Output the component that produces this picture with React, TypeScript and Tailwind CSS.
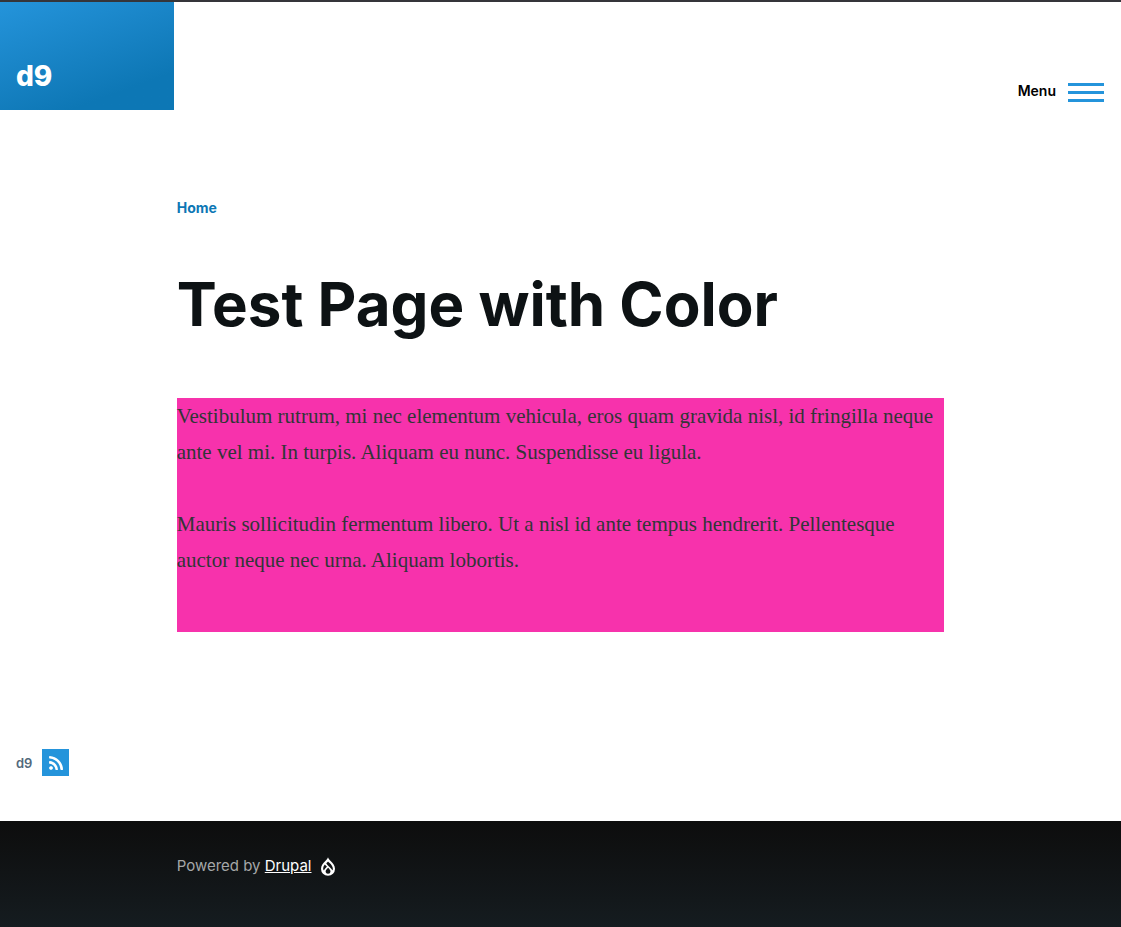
import React from 'react';

const paragraphs = [
  'Vestibulum rutrum, mi nec elementum vehicula, eros quam gravida nisl, id fringilla neque ante vel mi. In turpis. Aliquam eu nunc. Suspendisse eu ligula.',
  'Mauris sollicitudin fermentum libero. Ut a nisl id ante tempus hendrerit. Pellentesque auctor neque nec urna. Aliquam lobortis.',
];

const RssIcon = () => (
  <svg className="h-[14px] w-[14px]" viewBox="0 0 14.2 14.2" fill="white" aria-hidden="true">
    <path d="M4 12.2c0-2.5-3.9-2.4-3.9 0C.1 14.7 4 14.6 4 12.2zM9.1 13.4C8.7 9 5.2 5.5.8 5.1c-1 0-1 2.7-.1 2.7 3.1.3 5.5 2.7 5.8 5.8 0 .7 2.1.7 2.5.3.1-.2.1-.3.1-.5zM14.2 13.5c-.1-3.5-1.6-6.9-4.1-9.3C7.6 1.7 4.3.2.8 0c-1 0-1 2.6-.1 2.6 5.8.3 10.5 5 10.8 10.8 0 1.1 2.8 1 2.7.1z" />
  </svg>
);

const DrupalIcon = () => (
  <svg className="h-[19px] w-[14px]" viewBox="0 0 42.15 55.08" fill="white" aria-hidden="true">
    <path
      fillRule="evenodd"
      d="M29.75 11.73C25.87 7.86 22.18 4.16 21.08 0 20 4.16 16.28 7.86 12.4 11.73 6.59 17.54 0 24.12 0 34a21.08 21.08 0 1 0 42.15 0c0-9.88-6.59-16.46-12.4-22.27zM10.84 35.92a14.13 14.13 0 0 0-1.65 2.62.54.54 0 0 1-.36.3h-.18c-.47 0-1-.92-1-.92-.14-.22-.27-.45-.4-.69l-.09-.19C5.94 34.25 7 30.28 7 30.28a17.42 17.42 0 0 1 2.52-5.41 31.53 31.53 0 0 1 2.28-3l1 1 4.72 4.82a.54.54 0 0 1 0 .72l-4.93 5.47zm10.48 13.81a7.29 7.29 0 0 1-5.4-12.14c1.54-1.83 3.42-3.63 5.46-6 2.42 2.58 4 4.35 5.55 6.29a3.08 3.08 0 0 1 .32.48 7.15 7.15 0 0 1 1.3 4.12 7.23 7.23 0 0 1-7.23 7.25zM35 38.14a.84.84 0 0 1-.67.58h-.14a1.22 1.22 0 0 1-.68-.55 37.77 37.77 0 0 0-4.28-5.31l-1.93-2-6.41-6.65a54 54 0 0 1-3.84-3.94 1.3 1.3 0 0 0-.1-.15 3.84 3.84 0 0 1-.51-1v-.19a3.4 3.4 0 0 1 1-3c1.24-1.24 2.49-2.49 3.67-3.79 1.3 1.44 2.69 2.82 4.06 4.19a57.6 57.6 0 0 1 7.55 8.58A16 16 0 0 1 35.65 34a14.55 14.55 0 0 1-.65 4.14z"
    />
  </svg>
);

const Header = () => (
  <header className="flex items-start justify-between">
    <a
      href="#"
      className="flex h-[108px] w-[174px] items-end bg-linear-160 from-[#2494db] to-[#0d77b5] to-78% px-4 pb-4 text-[28px] leading-9 font-extrabold text-white"
    >
      d9
    </a>
    <button type="button" className="mt-[71px] mr-[17px] flex h-9 items-center gap-3 text-sm font-semibold text-black">
      Menu
      <span className="mt-0.5 flex w-9 flex-col gap-[5px]">
        <span className="h-[3px] bg-[#2494db]" />
        <span className="h-[3px] bg-[#2494db]" />
        <span className="h-[3px] bg-[#2494db]" />
      </span>
    </button>
  </header>
);

export default function App() {
  return (
    <div className="flex min-h-screen flex-col border-t-2 border-[#35353a] bg-white font-['Inter',sans-serif]">
      <Header />

      <main className="grid grid-cols-14 gap-x-9 px-4 pt-[89px]">
        <div className="col-span-10 col-start-3">
          <nav aria-label="Breadcrumb" className="text-sm leading-[18px] font-bold text-[#0d77b5]">
            <a href="#">Home</a>
          </nav>
          <h1 className="mt-[51px] text-[60px] leading-[72px] font-bold text-[#0d1214]">Test Page with Color</h1>
          <div className="mt-[58px] bg-[#f732ac] pb-[18px] font-['Liberation_Serif',serif] text-[21px] leading-9 text-[#313637]">
            {paragraphs.map((text) => (
              <p key={text} className="pb-9">
                {text}
              </p>
            ))}
          </div>
        </div>
      </main>

      <div className="mt-[117px] mb-[45px] flex items-center gap-[10px] px-4">
        <span className="text-[13px] leading-[18px] font-semibold text-[#52697b]">d9</span>
        <a href="#" aria-label="RSS feed" className="flex h-[27px] w-[27px] items-center justify-center bg-[#2494db]">
          <RssIcon />
        </a>
      </div>

      <footer className="grid flex-1 grid-cols-14 gap-x-9 bg-linear-to-b from-[#0d0d0d] to-[#151c20] px-4 pt-9 pb-[51px]">
        <div className="col-span-10 col-start-3 flex items-start gap-[9px] text-[15px] leading-[18px] text-[#a5a7a8]">
          <span>
            Powered by{' '}
            <a href="#" className="text-white underline">
              Drupal
            </a>
          </span>
          <DrupalIcon />
        </div>
      </footer>
    </div>
  );
}
